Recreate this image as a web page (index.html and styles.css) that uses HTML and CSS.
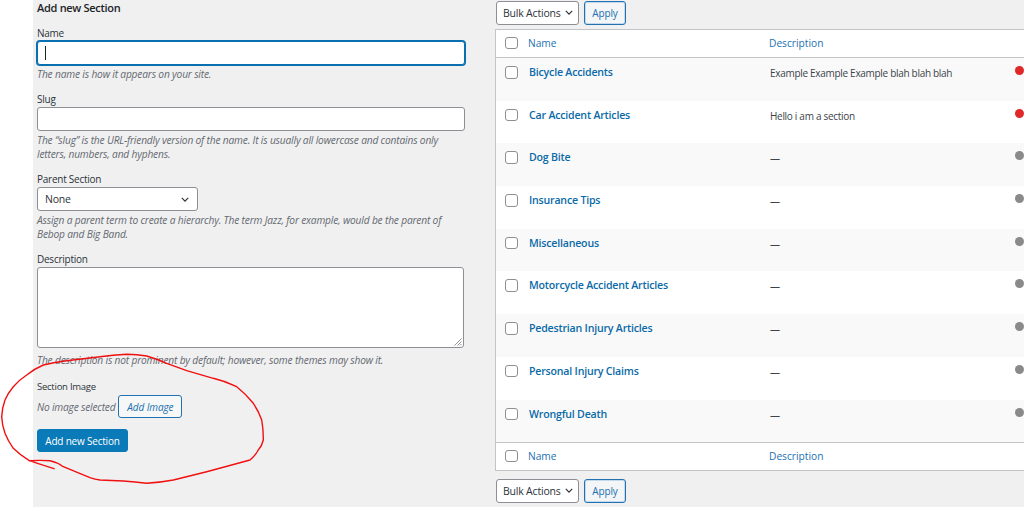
FILE: index.html
```html
<!DOCTYPE html>
<html lang="en">
<head>
<meta charset="utf-8">
<title>Sections</title>
<link rel="stylesheet" href="styles.css">
</head>
<body>
<div class="page">
  <main class="main">
    <form class="form-col">
      <h2 class="form-title">Add new Section</h2>
      <div class="field field-name">
        <label class="label">Name</label>
        <div class="input input-focus"><span class="caret"></span></div>
        <p class="help">The name is how it appears on your site.</p>
      </div>
      <div class="field field-slug">
        <label class="label">Slug</label>
        <div class="input"></div>
        <p class="help">The “slug” is the URL-friendly version of the name. It is usually all lowercase and contains only letters, numbers, and hyphens.</p>
      </div>
      <div class="field field-parent">
        <label class="label">Parent Section</label>
        <div class="select select-parent"><span>None</span>
          <svg class="chev" viewBox="0 0 10 6"><path d="M1 1l4 4 4-4"/></svg>
        </div>
        <p class="help">Assign a parent term to create a hierarchy. The term Jazz, for example, would be the parent of Bebop and Big Band.</p>
      </div>
      <div class="field field-desc">
        <label class="label">Description</label>
        <div class="textarea">
          <svg class="grip" viewBox="0 0 8 8"><path d="M7.5 .5l-7 7M7.5 3.5l-4 4M7.5 6l-1.5 1.5"/></svg>
        </div>
        <p class="help help-desc">The description is not prominent by default; however, some themes may show it.</p>
      </div>
      <div class="field field-image">
        <label class="label label-small">Section Image</label>
        <div class="image-row">
          <span class="no-image">No image selected</span>
          <button type="button" class="btn btn-image">Add Image</button>
        </div>
      </div>
      <button type="button" class="btn-primary">Add new Section</button>
    </form>
    <section class="list-col">
      <div class="bulk bulk-top">
        <div class="select select-bulk"><span>Bulk Actions</span>
          <svg class="chev" viewBox="0 0 10 6"><path d="M1 1l4 4 4-4"/></svg>
        </div>
        <button type="button" class="btn btn-apply">Apply</button>
      </div>
      <div class="table">
        <div class="row row-head">
          <span class="check"></span><a class="col-name">Name</a><a class="col-desc">Description</a>
        </div>
        <div class="row row-item odd">
          <span class="check"></span><a class="item-name">Bicycle Accidents</a><span class="item-desc">Example Example Example blah blah blah</span><span class="dot red"></span>
        </div>
        <div class="row row-item">
          <span class="check"></span><a class="item-name">Car Accident Articles</a><span class="item-desc">Hello i am a section</span><span class="dot red"></span>
        </div>
        <div class="row row-item odd">
          <span class="check"></span><a class="item-name">Dog Bite</a><span class="item-desc">—</span><span class="dot"></span>
        </div>
        <div class="row row-item">
          <span class="check"></span><a class="item-name">Insurance Tips</a><span class="item-desc">—</span><span class="dot"></span>
        </div>
        <div class="row row-item odd">
          <span class="check"></span><a class="item-name">Miscellaneous</a><span class="item-desc">—</span><span class="dot"></span>
        </div>
        <div class="row row-item">
          <span class="check"></span><a class="item-name">Motorcycle Accident Articles</a><span class="item-desc">—</span><span class="dot"></span>
        </div>
        <div class="row row-item odd">
          <span class="check"></span><a class="item-name">Pedestrian Injury Articles</a><span class="item-desc">—</span><span class="dot"></span>
        </div>
        <div class="row row-item">
          <span class="check"></span><a class="item-name">Personal Injury Claims</a><span class="item-desc">—</span><span class="dot"></span>
        </div>
        <div class="row row-item odd">
          <span class="check"></span><a class="item-name">Wrongful Death</a><span class="item-desc">—</span><span class="dot"></span>
        </div>
        <div class="row row-foot">
          <span class="check"></span><a class="col-name">Name</a><a class="col-desc">Description</a>
        </div>
      </div>
      <div class="bulk bulk-bottom">
        <div class="select select-bulk"><span>Bulk Actions</span>
          <svg class="chev" viewBox="0 0 10 6"><path d="M1 1l4 4 4-4"/></svg>
        </div>
        <button type="button" class="btn btn-apply">Apply</button>
      </div>
    </section>
  </main>
</div>
<svg class="annotation" viewBox="0 0 1024 507">
  <path d="M54 468.7Q42 465 29.3 460.7Q40 460 50 460.7Q57 462 63.3 466.7L90 477.7Q95 479.5 100 480L123.3 481Q135 482 146.7 483.3Q160 482.5 173.3 480L206.7 471.7L250 460Q255 456 258.3 450Q262 446 263.3 440Q263.5 430 261.7 420Q258.5 411 253.3 403.3Q246 394 236.7 386.7Q225 381 213.3 378.3L186.7 370.7L166.7 363.3Q157 359 146.7 356Q137 354.5 126.7 354.3Q113 355 100 356.7L66.7 360.7Q55 362 43.3 365Q34 369 26.7 375Q19 380 13.3 386.7Q8 393 5 400Q2 408 1.7 416.7Q2 425 5 433.3Q8 441 13.3 448.3Q20 455 29.3 460.7"/>
</svg>
</body>
</html>
```

FILE: styles.css
```css
* { box-sizing: border-box; }
html, body { margin: 0; padding: 0; height: 507px; overflow: hidden; background: #fff; }
body { font-family: "Open Sans", "Noto Sans", sans-serif; font-size: 11px; color: #3c434a; position: relative; }
.page { padding-left: 33px; height: 507px; }
.main { display: flex; height: 507px; background: #f0f0f1; padding-left: 4px; overflow: hidden; }

.form-col { width: 428px; flex: none; }
.form-title { margin: 0; font-size: 11px; font-weight: 600; line-height: 16px; letter-spacing: -.3px; color: #1d2327; }
.field-name { margin-top: 10px; }
.field-slug { margin-top: 11px; }
.field-parent { margin-top: 11px; }
.field-desc { margin-top: 11px; }
.field-image { margin-top: 13px; }
.label { display: block; font-size: 10px; line-height: 14px; letter-spacing: -.25px; color: #2c3338; margin-bottom: 1px; }
.label-small { font-size: 9.5px; }
.help { margin: 2px 0 0; font-size: 10.2px; line-height: 14px; letter-spacing: -.175px; font-style: italic; color: #646970; }
.help-desc { margin-top: 5px; }

.input { height: 24px; background: #fff; border: 1px solid #8c8f94; border-radius: 3px; padding-left: 7px; display: flex; align-items: center; }
.input-focus { border-color: #0a6fb0; box-shadow: 0 0 0 1px #0a6fb0; }
.caret { width: 1px; height: 14px; background: #1d2327; }
.select { display: flex; align-items: center; justify-content: space-between; background: #fff; border: 1px solid #8c8f94; border-radius: 3px; height: 24px; font-size: 10.5px; letter-spacing: -.2px; white-space: nowrap; color: #2c3338; }
.select-parent { width: 161px; padding: 0 8px 0 7px; }
.select-bulk { width: 83px; padding: 0 5px 1px 6px; }
.chev { width: 8px; height: 5px; fill: none; stroke: #2c3338; stroke-width: 1.5; }
.textarea { position: relative; width: 427px; height: 81px; background: #fff; border: 1px solid #8c8f94; border-radius: 3px; }
.grip { position: absolute; right: 1px; bottom: 1px; width: 8px; height: 8px; fill: none; stroke: #777; stroke-width: .8; }

.image-row { display: flex; align-items: center; gap: 3px; margin-top: 1px; }
.no-image { font-size: 10.2px; letter-spacing: -.2px; font-style: italic; color: #646970; }
.btn { height: 23px; background: #f6f7f7; border: 1px solid #2271b1; border-radius: 3px; color: #2271b1; font-family: inherit; font-size: 10px; letter-spacing: -.1px; padding: 0; }
.btn-image { width: 64px; font-style: italic; }
.btn-primary { display: block; margin-top: 11px; width: 91px; height: 23px; padding: 0; background: #0a7ab8; border: 1px solid #0a7ab8; border-radius: 3px; color: #fff; font-family: inherit; font-size: 10px; letter-spacing: -.2px; }

.list-col { flex: 1; min-width: 0; margin-left: 30px; }
.bulk { display: flex; gap: 5px; margin-left: 1px; }
.bulk-top { margin-top: 1px; }
.bulk-bottom { margin-top: 8px; }
.bulk-bottom .select-bulk { padding-bottom: 0; }
.btn-apply { width: 42px; height: 24px; padding-bottom: 1px; background: #f3f5f6; box-shadow: 0 0 0 1px #c5d9ed inset; }
.bulk-bottom .btn-apply { padding-bottom: 0; }

.table { margin-top: 4px; width: 560px; background: #fff; border: 1px solid #c3c4c7; }
.row { display: flex; align-items: center; position: relative; padding-left: 9px; }
.row-head { height: 28px; padding-bottom: 1px; border-bottom: 1px solid #c3c4c7; }
.row-foot { height: 27.7px; padding-bottom: 1px; border-top: 1px solid #c3c4c7; }
.row-item { height: 42.7px; align-items: flex-start; padding-top: 8px; }
.row-item.odd { background: #f9f9f9; }
.check { flex: none; width: 12.5px; height: 12.5px; background: #fff; border: 1px solid #8c8f94; border-radius: 3px; }
.col-name { width: 241px; margin-left: 10.5px; color: #2271b1; font-size: 10.2px; }
.col-desc { color: #2271b1; font-size: 10.2px; }
.item-name { width: 241px; margin-left: 11.5px; margin-top: -2px; color: #0a6aa8; font-weight: 600; font-size: 10.6px; letter-spacing: -.2px; line-height: 16px; }
.item-desc { font-size: 10px; letter-spacing: -.3px; line-height: 15px; color: #3c434a; }
.dot { position: absolute; left: 519px; top: 8px; width: 9px; height: 9px; border-radius: 50%; background: #8a8a8a; }
.dot.red { background: #e02828; }

.annotation { position: absolute; left: 0; top: 0; width: 1024px; height: 507px; pointer-events: none; }
.annotation path { fill: none; stroke: #f01010; stroke-width: 1.4; stroke-linecap: round; stroke-linejoin: round; }
```
